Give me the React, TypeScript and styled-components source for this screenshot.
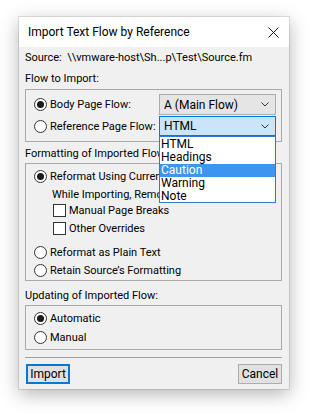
import React from "react";
import styled, { createGlobalStyle } from "styled-components";

const Global = createGlobalStyle`
  html, body { margin: 0; padding: 0; background: #ffffff; }
  body { font-family: Roboto, "Liberation Sans", sans-serif; font-size: 11px; color: #000; }
  * { box-sizing: border-box; }
`;

const Page = styled.div`
  padding: 17px 0 0 19px;
  width: 314px;
  height: 414px;
`;

const Window = styled.div`
  width: 270px;
  height: 372px;
  background: #f0f0f0;
  display: flex;
  flex-direction: column;
  box-shadow: 0 0 0 1px rgba(0, 0, 0, 0.1), 0 5px 18px rgba(0, 0, 0, 0.3);
`;

const TitleBar = styled.div`
  height: 30px;
  background: #ffffff;
  display: flex;
  align-items: center;
  justify-content: space-between;
  padding: 0 10px 0 9px;
  font-size: 12px;
`;

const Content = styled.div`
  padding: 3px 7px 0 6px;
  display: flex;
  flex-direction: column;
`;

const Line = styled.div<{ $mt?: number; $mb?: number }>`
  height: 16px;
  line-height: 16px;
  white-space: nowrap;
  margin-top: ${(p) => p.$mt ?? 0}px;
  margin-bottom: ${(p) => p.$mb ?? 0}px;
`;

const Group = styled.div<{ $pb: number }>`
  border: 1px solid #a9a9a9;
  padding: 0 5px ${(p) => p.$pb}px 8px;
  display: flex;
  flex-direction: column;
  position: relative;
`;

const Row = styled.div<{ $h: number; $mt?: number; $indent?: number }>`
  height: ${(p) => p.$h}px;
  margin-top: ${(p) => p.$mt ?? 0}px;
  padding-left: ${(p) => p.$indent ?? 0}px;
  display: flex;
  align-items: center;
  white-space: nowrap;
  position: relative;
`;

const ComboRow = styled.div<{ $h: number; $mt?: number }>`
  height: ${(p) => p.$h}px;
  margin-top: ${(p) => p.$mt ?? 0}px;
  display: grid;
  grid-template-columns: minmax(0, 1fr) 117px;
  align-items: center;
  position: relative;
`;

const Label = styled.span`
  display: flex;
  align-items: center;
  white-space: nowrap;
`;

const Radio = styled.span<{ $on?: boolean }>`
  width: 13px;
  height: 13px;
  border-radius: 50%;
  border: 1px solid #333333;
  background: #ffffff;
  display: inline-flex;
  align-items: center;
  justify-content: center;
  margin-right: 3px;
  flex: none;
  &::after {
    content: "";
    width: 7px;
    height: 7px;
    border-radius: 50%;
    background: ${(p) => (p.$on ? "#1a1a1a" : "transparent")};
  }
`;

const Check = styled.span`
  width: 13px;
  height: 13px;
  border: 1px solid #333333;
  background: #ffffff;
  margin-left: 1px;
  margin-right: 3px;
  flex: none;
`;

const Combo = styled.div<{ $active?: boolean }>`
  width: 117px;
  height: ${(p) => (p.$active ? 20 : 21)}px;
  border: 1px solid ${(p) => (p.$active ? "#0078d7" : "#adadad")};
  background: ${(p) => (p.$active ? "#cce4f7" : "#e5e5e5")};
  display: flex;
  align-items: center;
  padding: 0 6px 0 4px;
  font-size: 12px;
`;

const ComboText = styled.span`
  flex: 1;
`;

const List = styled.div`
  position: absolute;
  top: 20px;
  right: 0;
  width: 117px;
  height: 67px;
  background: #ffffff;
  border: 1px solid #2b7bd0;
  padding: 1px 0;
  z-index: 2;
  font-size: 12px;
`;

const Item = styled.div<{ $sel?: boolean }>`
  height: 13px;
  line-height: 13px;
  padding-left: 1px;
  background: ${(p) => (p.$sel ? "#3d95f0" : "transparent")};
  color: ${(p) => (p.$sel ? "#ffffff" : "#000000")};
`;

const Separator = styled.div`
  height: 1px;
  background: #a0a0a0;
  margin-top: 7px;
`;

const Buttons = styled.div`
  display: flex;
  justify-content: space-between;
  margin-top: 6px;
  padding: 0 0 0 1px;
`;

const Button = styled.div<{ $def?: boolean }>`
  width: 44px;
  height: 20px;
  background: #e1e1e1;
  border: ${(p) => (p.$def ? "2px solid #0078d7" : "1px solid #adadad")};
  display: flex;
  align-items: center;
  justify-content: center;
  line-height: 16px;
  font-size: 12px;
`;

const Chevron = () => (
  <svg width="8" height="5" viewBox="0 0 8 5" fill="none">
    <path d="M0.5 0.5 L4 4 L7.5 0.5" stroke="#333" strokeWidth="1" />
  </svg>
);

const CloseIcon = () => (
  <svg width="11" height="11" viewBox="0 0 11 11" fill="none">
    <path d="M0.5 0.5 L10.5 10.5 M10.5 0.5 L0.5 10.5" stroke="#111" strokeWidth="1" />
  </svg>
);

export default function App() {
  return (
    <>
      <Global />
      <Page>
        <Window>
          <TitleBar>
            <span>Import Text Flow by Reference</span>
            <CloseIcon />
          </TitleBar>
          <Content>
            <Line>Source:&nbsp; \\vmware-host\Sh...p\Test\Source.fm</Line>
            <Line $mt={5} $mb={2}>Flow to Import:</Line>
            <Group $pb={5}>
              <ComboRow $h={21} $mt={4}>
                <Label>
                  <Radio $on />
                  Body Page Flow:
                </Label>
                <Combo>
                  <ComboText>A (Main Flow)</ComboText>
                  <Chevron />
                </Combo>
              </ComboRow>
              <ComboRow $h={20} $mt={1}>
                <Label>
                  <Radio />
                  Reference Page Flow:
                </Label>
                <Combo $active>
                  <ComboText>HTML</ComboText>
                  <Chevron />
                </Combo>
                <List>
                  <Item>HTML</Item>
                  <Item>Headings</Item>
                  <Item $sel>Caution</Item>
                  <Item>Warning</Item>
                  <Item>Note</Item>
                </List>
              </ComboRow>
            </Group>
            <Line $mt={4} $mb={1}>Formatting of Imported Flow:</Line>
            <Group $pb={1}>
              <Row $h={20} $mt={2}>
                <Radio $on />
                Reformat Using Current Formats
              </Row>
              <Row $h={16} $indent={18}>While Importing, Remove:</Row>
              <Row $h={17} $indent={18}>
                <Check />
                Manual Page Breaks
              </Row>
              <Row $h={18} $indent={18}>
                <Check />
                Other Overrides
              </Row>
              <Row $h={20} $mt={5}>
                <Radio />
                Reformat as Plain Text
              </Row>
              <Row $h={17}>
                <Radio />
                Retain Source’s Formatting
              </Row>
            </Group>
            <Line $mt={7} $mb={1}>Updating of Imported Flow:</Line>
            <Group $pb={3}>
              <Row $h={20} $mt={2}>
                <Radio $on />
                Automatic
              </Row>
              <Row $h={18}>
                <Radio />
                Manual
              </Row>
            </Group>
            <Separator />
            <Buttons>
              <Button $def>Import</Button>
              <Button>Cancel</Button>
            </Buttons>
          </Content>
        </Window>
      </Page>
    </>
  );
}
